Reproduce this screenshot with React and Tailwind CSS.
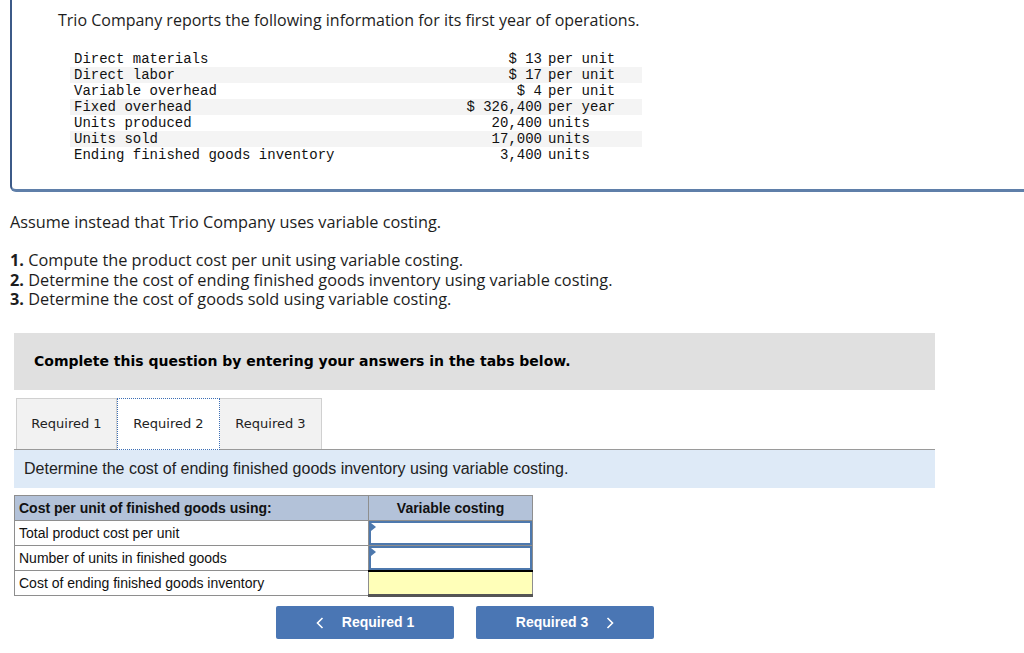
import React from "react";

const facts = [
  ["Direct materials", "$ 13", "per unit"],
  ["Direct labor", "$ 17", "per unit"],
  ["Variable overhead", "$ 4", "per unit"],
  ["Fixed overhead", "$ 326,400", "per year"],
  ["Units produced", "20,400", "units"],
  ["Units sold", "17,000", "units"],
  ["Ending finished goods inventory", "3,400", "units"],
];

const rows = [
  { label: "Total product cost per unit", kind: "input" },
  { label: "Number of units in finished goods", kind: "input" },
  { label: "Cost of ending finished goods inventory", kind: "total" },
];

function InputCell() {
  return (
    <div className="relative h-full border-2 border-[#4d78ad] bg-white">
      <span className="absolute left-0 top-0 w-0 h-0 border-y-[4px] border-y-transparent border-l-[5px] border-l-[#4d78ad]" />
    </div>
  );
}

function Chevron({ dir }) {
  return (
    <svg width="8" height="12" viewBox="0 0 8 12" fill="none" stroke="white" strokeWidth="1.6">
      {dir === "left" ? <polyline points="6.5,1 1.5,6 6.5,11" /> : <polyline points="1.5,1 6.5,6 1.5,11" />}
    </svg>
  );
}

export default function App() {
  const sans = "font-['Open_Sans',sans-serif]";
  return (
    <div className="w-[1024px] h-[653px] overflow-hidden bg-white text-[#222]">
      {/* info box */}
      <div className="ml-[10px] -mr-[10px] h-[192px] border-l-2 border-b-[3px] border-l-[#3c5a88] border-b-[#5f7fa9] rounded-bl-[6px]">
        <p className={`${sans} text-[16px] pl-[46px] pt-[10px] leading-[20px] text-[#1d1d1d]`}>
          Trio Company reports the following information for its first year of operations.
        </p>
        <table className="ml-[58px] mt-[21px] font-['Liberation_Mono',monospace] text-[14px] leading-[16px] text-[#111] border-collapse">
          <tbody>
            {facts.map(([a, b, c], i) => (
              <tr key={a} className={i % 2 === 1 ? "bg-[#f4f4f4]" : ""}>
                <td className="w-[396px] pl-[4px] whitespace-pre">{a}</td>
                <td className="w-[76px] text-right whitespace-pre">{b}</td>
                <td className="w-[100px] pl-[6px] whitespace-pre">{c}</td>
              </tr>
            ))}
          </tbody>
        </table>
      </div>

      <div className={`${sans} text-[16.3px] leading-[19.5px] text-[#1d1d1d] px-[10px]`}>
        <p className="mt-[21px]">Assume instead that Trio Company uses variable costing.</p>
        <p className="mt-[18.5px]">
          <b>1.</b> Compute the product cost per unit using variable costing.
        </p>
        <p>
          <b>2.</b> Determine the cost of ending finished goods inventory using variable costing.
        </p>
        <p>
          <b>3.</b> Determine the cost of goods sold using variable costing.
        </p>
      </div>

      <div className="mx-[14px] w-[921px]">
        <div className="mt-[23.5px] h-[57px] bg-[#e0e0e0] flex items-center pl-[20px] font-['DejaVu_Sans',Verdana,sans-serif] font-bold text-[14px] text-black">
          Complete this question by entering your answers in the tabs below.
        </div>

        <div className="mt-[8px] flex items-end h-[52px] border-b border-b-[#9a9a9a] font-['DejaVu_Sans',Verdana,sans-serif] text-[13px] text-[#222]">
          <div className="ml-[2px] h-[51px] w-[101px] flex items-center justify-center bg-[#f2f2f2] border border-[#d0d0d0] border-b-0">
            Required 1
          </div>
          <div className="h-[52px] w-[103px] -mb-px flex items-center justify-center bg-white border border-dotted border-[#3d6fb5]">
            Required 2
          </div>
          <div className="h-[51px] w-[102px] flex items-center justify-center bg-[#f2f2f2] border border-[#d0d0d0] border-b-0 border-l-0">
            Required 3
          </div>
        </div>

        <div className="h-[38px] bg-[#deeaf7] flex items-center pl-[10px] font-['Liberation_Sans',Arial,sans-serif] text-[16px] text-[#222]">
          Determine the cost of ending finished goods inventory using variable costing.
        </div>

        <table className="mt-[7px] w-[519px] border-collapse font-['Liberation_Sans',Arial,sans-serif] text-[14px] text-[#111]">
          <thead>
            <tr className="h-[25px] bg-[#b3c2d9]">
              <th className="w-[354px] text-left font-bold pl-[4px] border border-[#8e8e8e]">
                Cost per unit of finished goods using:
              </th>
              <th className="text-center font-bold border border-[#8e8e8e]">Variable costing</th>
            </tr>
          </thead>
          <tbody>
            {rows.map((r) => (
              <tr key={r.label} className="h-[25px]">
                <td className="pl-[4px] border border-[#8e8e8e] leading-none">{r.label}</td>
                <td
                  className={
                    r.kind === "total"
                      ? "p-0 h-[25px] bg-[#ffffb9] border border-[#8e8e8e] border-t-2 border-t-black border-b-[3px] border-b-[#555]"
                      : "p-0 h-[25px] border border-[#8e8e8e]"
                  }
                >
                  {r.kind === "input" && <InputCell />}
                </td>
              </tr>
            ))}
          </tbody>
        </table>

        <div className="mt-[9px] ml-[262px] flex gap-[22px] font-['Liberation_Sans',Arial,sans-serif] font-bold text-[14px] text-white">
          <button className="w-[178px] h-[33px] bg-[#4a76b4] rounded-[2px] flex items-center justify-center gap-[18px]">
            <Chevron dir="left" />
            <span>Required 1</span>
          </button>
          <button className="w-[178px] h-[33px] bg-[#4a76b4] rounded-[2px] flex items-center justify-center gap-[18px]">
            <span>Required 3</span>
            <Chevron dir="right" />
          </button>
        </div>
      </div>
    </div>
  );
}
